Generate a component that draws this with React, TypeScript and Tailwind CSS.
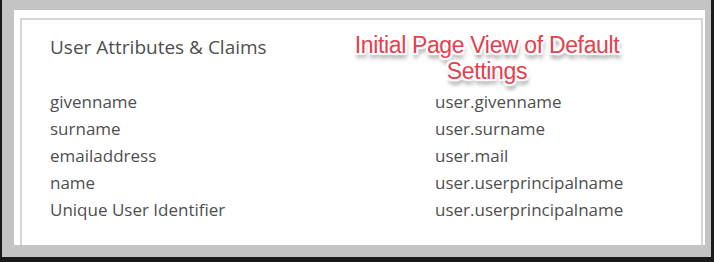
const claims = [
  { name: 'givenname', value: 'user.givenname' },
  { name: 'surname', value: 'user.surname' },
  { name: 'emailaddress', value: 'user.mail' },
  { name: 'name', value: 'user.userprincipalname' },
  { name: 'Unique User Identifier', value: 'user.userprincipalname' },
]

function Callout() {
  return (
    <div
      className="absolute left-[337px] top-[32px] w-[296px] text-center text-[23px] leading-[26px] tracking-[-0.35px] text-[#e5404e] [font-family:'Liberation_Sans',Arial,sans-serif] [text-shadow:2px_0_1px_#fff,-2px_0_1px_#fff,0_2px_1px_#fff,0_-2px_1px_#fff,2px_2px_1px_#fff,-2px_2px_1px_#fff,2px_-2px_1px_#fff,-2px_-2px_1px_#fff,1px_5px_4px_rgba(0,0,0,0.6)]"
    >
      <div>Initial Page View of Default</div>
      <div>Settings</div>
    </div>
  )
}

export default function App() {
  return (
    <div className="w-[714px] h-[262px] bg-[#1a1a1a] pl-[2px] pr-[3px] pb-[5px]">
      <div className="relative h-full bg-[#c4c4c4] pt-[10px] pl-[12px] pr-[6px] pb-[12px]">
        <div className="h-full bg-white pt-[8px] pl-[6px] pr-[2px]">
          <div className="h-full border-l-2 border-t-2 border-r-2 border-[#d6d6d6] pl-[28px] pt-[14px] text-[17px] leading-[27px] text-[#4f4f4f] [font-family:'Open_Sans','Noto_Sans',sans-serif]">
            <div className="mb-[27px] text-[19px]">User Attributes &amp; Claims</div>
            <div className="grid grid-cols-[385px_1fr]">
              {claims.map((c) => (
                <div key={c.name} className="contents">
                  <div>{c.name}</div>
                  <div>{c.value}</div>
                </div>
              ))}
            </div>
          </div>
        </div>
        <Callout />
      </div>
    </div>
  )
}
